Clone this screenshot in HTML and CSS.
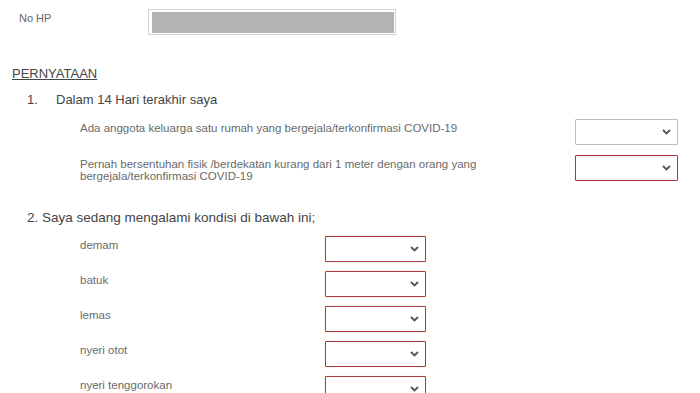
FILE: index.html
```html
<!DOCTYPE html>
<html lang="id">
<head>
    <meta charset="UTF-8">
    <meta name="viewport" content="width=device-width, initial-scale=1.0">
    <title>Pernyataan</title>
    <link rel="stylesheet" href="styles.css">
</head>
<body>
<div class="form">
    <div class="field-hp">
        <span class="hp-label">No HP</span>
        <div class="masked"><div class="masked-fill"></div></div>
    </div>

    <h3 class="section">PERNYATAAN</h3>

    <div class="question"><span class="num">1.</span>Dalam 14 Hari terakhir saya</div>
    <div class="q-row">
        <label>Ada anggota keluarga satu rumah yang bergejala/terkonfirmasi COVID-19</label>
        <div class="select">
            <svg width="9" height="6" viewBox="0 0 9 6"><path d="M1 1 L4.5 4.5 L8 1" fill="none" stroke="#555" stroke-width="1.8"/></svg>
        </div>
    </div>
    <div class="q-row">
        <label>Pernah bersentuhan fisik /berdekatan kurang dari 1 meter dengan orang yang bergejala/terkonfirmasi COVID-19</label>
        <div class="select invalid">
            <svg width="9" height="6" viewBox="0 0 9 6"><path d="M1 1 L4.5 4.5 L8 1" fill="none" stroke="#555" stroke-width="1.8"/></svg>
        </div>
    </div>

    <div class="question q2">2. Saya sedang mengalami kondisi di bawah ini;</div>
    <div class="symptoms">
        <div class="sym-row">
            <label>demam</label>
            <div class="select invalid"><svg width="9" height="6" viewBox="0 0 9 6"><path d="M1 1 L4.5 4.5 L8 1" fill="none" stroke="#555" stroke-width="1.8"/></svg></div>
        </div>
        <div class="sym-row">
            <label>batuk</label>
            <div class="select invalid"><svg width="9" height="6" viewBox="0 0 9 6"><path d="M1 1 L4.5 4.5 L8 1" fill="none" stroke="#555" stroke-width="1.8"/></svg></div>
        </div>
        <div class="sym-row">
            <label>lemas</label>
            <div class="select invalid"><svg width="9" height="6" viewBox="0 0 9 6"><path d="M1 1 L4.5 4.5 L8 1" fill="none" stroke="#555" stroke-width="1.8"/></svg></div>
        </div>
        <div class="sym-row">
            <label>nyeri otot</label>
            <div class="select invalid"><svg width="9" height="6" viewBox="0 0 9 6"><path d="M1 1 L4.5 4.5 L8 1" fill="none" stroke="#555" stroke-width="1.8"/></svg></div>
        </div>
        <div class="sym-row">
            <label>nyeri tenggorokan</label>
            <div class="select invalid"><svg width="9" height="6" viewBox="0 0 9 6"><path d="M1 1 L4.5 4.5 L8 1" fill="none" stroke="#555" stroke-width="1.8"/></svg></div>
        </div>
    </div>
</div>
</body>
</html>
```

FILE: styles.css
```css
body {
    margin: 0;
    padding: 0;
    background-color: #fff;
    font-family: 'Liberation Sans', Arial, sans-serif;
    color: #444;
    overflow: hidden;
}
.form {
    padding-top: 9px;
    display: flex;
    flex-direction: column;
}
.field-hp {
    display: flex;
    align-items: flex-start;
}
.hp-label {
    width: 129px;
    padding-left: 19px;
    padding-top: 3px;
    font-size: 11px;
    line-height: 12px;
    color: #666;
}
.masked {
    box-sizing: border-box;
    width: 248px;
    height: 26px;
    border: 1px solid #d2d2d2;
    padding: 2px 1px 1px 3px;
}
.masked-fill {
    width: 100%;
    height: 100%;
    background-color: #b3b3b3;
}
.section {
    margin: 32px 0 0 12px;
    font-size: 13px;
    line-height: 14px;
    font-weight: normal;
    text-decoration: underline;
    color: #444;
}
.question {
    margin-top: 11px;
    padding-left: 27px;
    font-size: 13px;
    line-height: 15px;
    color: #444;
}
.question .num {
    display: inline-block;
    width: 29px;
}
.q2 {
    margin-top: 28px;
    font-size: 13.5px;
    line-height: 16px;
}
.q-row {
    display: flex;
    align-items: flex-start;
    padding: 0 22px 0 80px;
    margin-top: 12px;
}
.q-row + .q-row {
    margin-top: 10px;
}
.q-row label,
.sym-row label {
    padding-top: 3px;
    font-size: 11.5px;
    line-height: 12px;
    color: #6a6a6a;
}
.q-row label {
    width: 410px;
}
.q-row .select {
    margin-left: auto;
    width: 103px;
}
.symptoms {
    display: flex;
    flex-direction: column;
    gap: 9px;
    margin-top: 10px;
}
.sym-row {
    display: flex;
    align-items: flex-start;
    padding-left: 80px;
}
.sym-row label {
    width: 245px;
}
.sym-row .select {
    width: 101px;
}
.select {
    box-sizing: border-box;
    height: 26px;
    border: 1px solid #bdbdbd;
    border-radius: 1px;
    background-color: #fff;
    display: flex;
    align-items: center;
    justify-content: flex-end;
    padding-right: 6px;
}
.select.invalid {
    border-color: #a93a3a;
    box-shadow: 0 0 1px rgba(200, 60, 60, 0.35);
}
```
